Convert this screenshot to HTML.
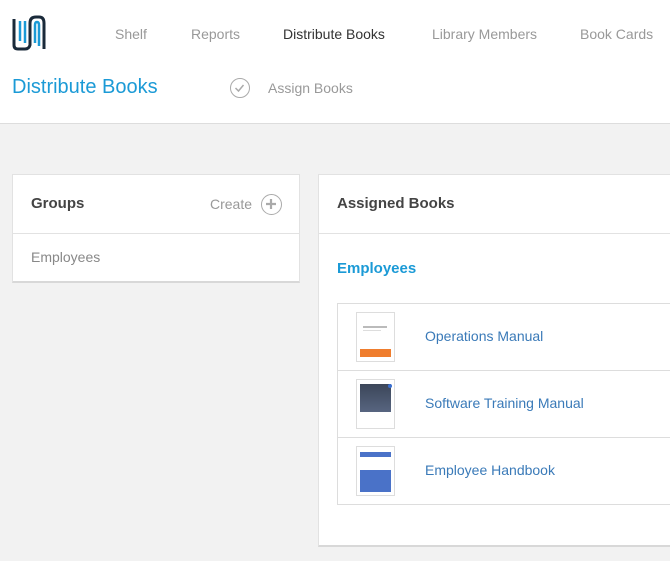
<!DOCTYPE html>
<html><head><style>
*{margin:0;padding:0;box-sizing:border-box}
body{width:670px;height:561px;overflow:hidden;background:#f2f2f2;font-family:"Liberation Sans",sans-serif;position:relative}
.hdr{position:absolute;left:0;top:0;width:670px;height:124px;background:#fff;border-bottom:1px solid #ddd}
.nav{position:absolute;top:26px;font-size:14px;color:#999}
.card{position:absolute;background:#fff;border:1px solid #e2e2e2;border-bottom:2px solid #d8d8d8}
.t{position:absolute;font-size:15px;font-weight:bold;color:#444}
.row{position:absolute;left:337px;width:340px;height:67px;border:1px solid #ddd;border-top:none;background:#fff}
.row .th{position:absolute;left:18px;top:8px;width:39px;height:50px;border:1px solid #ddd;background:#fff;overflow:hidden}
.row .lb{position:absolute;left:87px;top:24px;font-size:14px;color:#3a7ab8}
</style></head><body>
<div class="hdr">
<svg style="position:absolute;left:11px;top:13px" width="36" height="38" viewBox="0 0 36 38">
<path d="M3 6 V32 Q3 36 7 36 H14 Q18 36 19 32 L19 10 Q19 4 25 4 H28 Q33 4 33 10 V36" fill="none" stroke="#1a2a3a" stroke-width="3"/>
<path d="M9 8 V28 M14 8 V30" stroke="#1b9ad6" stroke-width="2.5" fill="none"/>
<path d="M24 30 V12 Q24 9 26 9 Q28 9 28 12 V33" stroke="#1b9ad6" stroke-width="2.5" fill="none"/>
</svg>
<div class="nav" style="left:115px">Shelf</div>
<div class="nav" style="left:191px">Reports</div>
<div class="nav" style="left:283px;color:#333">Distribute Books</div>
<div class="nav" style="left:432px">Library Members</div>
<div class="nav" style="left:580px">Book Cards</div>
<div style="position:absolute;left:12px;top:76px;font-size:20px;color:#1b9ad6">Distribute Books</div>
<div style="position:absolute;left:230px;top:78px;width:20px;height:20px;border:1.5px solid #aaa;border-radius:50%"><svg width="17" height="17" viewBox="0 0 17 17"><path d="M4.5 9 L7.5 12 L12.5 6" fill="none" stroke="#aaa" stroke-width="1.5"/></svg></div>
<div style="position:absolute;left:268px;top:80px;font-size:14px;color:#999">Assign Books</div>
</div>
<div class="card" style="left:12px;top:174px;width:288px;height:109px">
<div class="t" style="left:18px;top:20px">Groups</div>
<div style="position:absolute;left:197px;top:21px;font-size:14px;color:#999">Create</div>
<div style="position:absolute;left:248px;top:19px;width:21px;height:21px;border:1.5px solid #aaa;border-radius:50%"><svg width="18" height="18" viewBox="0 0 18 18"><path d="M9 4 V14 M4 9 H14" stroke="#aaa" stroke-width="2.2"/></svg></div>
<div style="position:absolute;left:0;top:58px;width:100%;border-top:1px solid #e2e2e2"></div>
<div style="position:absolute;left:18px;top:74px;font-size:14px;color:#888">Employees</div>
</div>
<div class="card" style="left:318px;top:174px;width:360px;height:373px;border-right:none">
<div class="t" style="left:18px;top:20px">Assigned Books</div>
<div style="position:absolute;left:0;top:58px;width:100%;border-top:1px solid #e2e2e2"></div>
<div style="position:absolute;left:18px;top:85px;font-size:15px;font-weight:bold;color:#1b9ad6">Employees</div>
</div>
<div style="position:absolute;left:337px;top:303px;width:340px;border-top:1px solid #ddd"></div>
<div class="row" style="top:304px"><div class="th"><div style="position:absolute;left:6px;top:13px;width:24px;height:2px;background:#bbb"></div><div style="position:absolute;left:6px;top:17px;width:18px;height:1px;background:#ddd"></div><div style="position:absolute;left:3px;top:36px;width:31px;height:8px;background:#ef7d2e"></div></div><div class="lb">Operations Manual</div></div>
<div class="row" style="top:371px"><div class="th"><div style="position:absolute;left:3px;top:4px;width:31px;height:28px;background:linear-gradient(#3c4659,#576580)"></div><div style="position:absolute;left:31px;top:4px;width:4px;height:4px;background:#3a6fd0;border-radius:50%"></div></div><div class="lb">Software Training Manual</div></div>
<div class="row" style="top:438px"><div class="th"><div style="position:absolute;left:3px;top:5px;width:31px;height:5px;background:#4a72c8"></div><div style="position:absolute;left:3px;top:23px;width:31px;height:22px;background:#4a72c8"></div></div><div class="lb">Employee Handbook</div></div>
</body></html>
